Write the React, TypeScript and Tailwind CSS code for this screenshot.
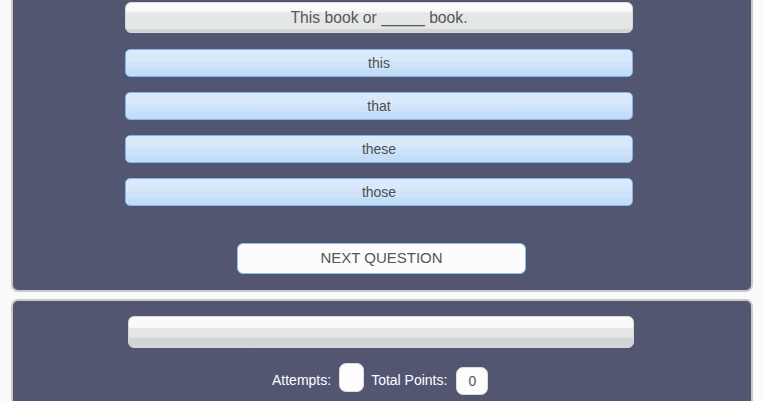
const options = ["this", "that", "these", "those"];

function QuestionBox() {
  return (
    <div className="ml-[112px] flex h-[31px] w-[508px] items-center justify-center rounded-[6px] border border-[#d8dada] bg-[linear-gradient(#fcfcfc_0%,#f8f8f8_32%,#e6e7e7_33%,#e4e5e5_88%,#d2d6d6_89%,#d0d4d4_100%)] text-[15.7px] text-[#575757]">
      This book or _____ book.
    </div>
  );
}

function OptionButton({ label }: { label: string }) {
  return (
    <button className="ml-[112px] flex h-[28px] w-[508px] items-center justify-center rounded-[5px] border border-[#84b5e8] bg-[linear-gradient(#dbeafc_0%,#d7e8fb_45%,#cfe3f9_46%,#cde2f9_72%,#c4def8_73%,#c2ddf8_100%)] text-[14px] text-[#4e4e4e]">
      {label}
    </button>
  );
}

export default function App() {
  return (
    <div
      className="min-h-[401px] overflow-hidden bg-[#fafafa] px-[11px]"
      style={{ fontFamily: '"Liberation Sans", Arial, sans-serif' }}
    >
      <section className="-mt-[12px] rounded-[7px] border-2 border-[#c9c9c9] bg-[#525671] pt-[12px] pb-[16px]">
        <QuestionBox />
        <div className="mt-[16px] flex flex-col gap-[15px]">
          {options.map((o) => (
            <OptionButton key={o} label={o} />
          ))}
        </div>
        <button className="ml-[224px] mt-[37px] flex h-[31px] w-[289px] items-center justify-center rounded-[6px] border border-[#8cbdef] bg-[#fcfcfd] text-[15px] text-[#555]">
          NEXT QUESTION
        </button>
      </section>

      <section className="mt-[7px] h-[120px] rounded-[7px] border-2 border-[#c9c9c9] bg-[#525671] pt-[15px]">
        <div className="ml-[115px] h-[32px] w-[506px] rounded-[6px] border border-[#d8dada] bg-[linear-gradient(#fcfcfc_0%,#f8f8f8_36%,#e6e7e7_37%,#e4e5e5_68%,#d2d6d6_69%,#d0d4d4_100%)]" />
        <div className="ml-[259px] mt-[15px] flex items-start text-[14px] leading-4 text-white">
          <span className="mt-[9px]">Attempts:</span>
          <span className="ml-[8px] h-[29px] w-[25px] rounded-[7px] border border-[#dcdcdc] bg-[#fdfdfd]" />
          <span className="ml-[7px] mt-[9px]">Total Points:</span>
          <span className="ml-[9px] mt-[4px] flex h-[28px] w-[32px] items-center justify-center rounded-[7px] border border-[#dcdcdc] bg-[#fdfdfd] text-[#555]">
            0
          </span>
        </div>
      </section>
    </div>
  );
}
